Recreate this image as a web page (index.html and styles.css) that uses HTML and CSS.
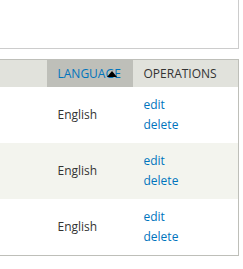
FILE: index.html
```html
<!DOCTYPE html>
<html lang="en">
<head>
    <meta charset="UTF-8">
    <meta name="viewport" content="width=device-width, initial-scale=1.0">
    <title>Languages</title>
    <link rel="stylesheet" href="styles.css">
</head>
<body>

    <div class="panel"></div>

    <table class="list">
        <colgroup>
            <col class="col-first">
            <col class="col-lang">
            <col class="col-ops">
        </colgroup>
        <thead>
            <tr>
                <th></th>
                <th class="active"><a href="#" class="sort">LANGUAGE<span class="arrow"></span></a></th>
                <th>OPERATIONS</th>
            </tr>
        </thead>
        <tbody>
            <tr>
                <td></td>
                <td>English</td>
                <td><a href="#">edit</a><br><a href="#">delete</a></td>
            </tr>
            <tr class="even">
                <td></td>
                <td>English</td>
                <td><a href="#">edit</a><br><a href="#">delete</a></td>
            </tr>
            <tr>
                <td></td>
                <td>English</td>
                <td><a href="#">edit</a><br><a href="#">delete</a></td>
            </tr>
        </tbody>
    </table>

</body>
</html>
```

FILE: styles.css
```css
body {
    margin: 0;
    font-family: "Open Sans", sans-serif;
    font-size: 12px;
    color: #333;
    background: #fff;
}
.panel {
    height: 57px;
    margin: -10px 4px 0 -10px;
    border: 1px solid #ccc;
    background: #fff;
}
.list {
    width: 249px;
    margin: 10px 0 0 -10px;
    table-layout: fixed;
    border-collapse: collapse;
    border: 1px solid #bebfb9;
}
.col-first {
    width: 56px;
}
.col-lang {
    width: 86px;
}
.list th {
    height: 27px;
    padding: 0 0 0 11px;
    background: #e1e2dc;
    font-weight: normal;
    text-align: left;
    white-space: nowrap;
}
.list th.active {
    background: #bebfb9;
}
.list td {
    height: 40px;
    padding: 8px 0 8px 11px;
    line-height: 20px;
    vertical-align: middle;
}
.list tr.even td {
    background: #f3f4ee;
}
a {
    color: #0074bd;
    text-decoration: none;
}
.sort {
    position: relative;
}
.arrow {
    position: absolute;
    left: 49px;
    top: 6px;
    width: 0;
    height: 0;
    border-left: 5.5px solid transparent;
    border-right: 5.5px solid transparent;
    border-bottom: 6px solid #000;
}
```
